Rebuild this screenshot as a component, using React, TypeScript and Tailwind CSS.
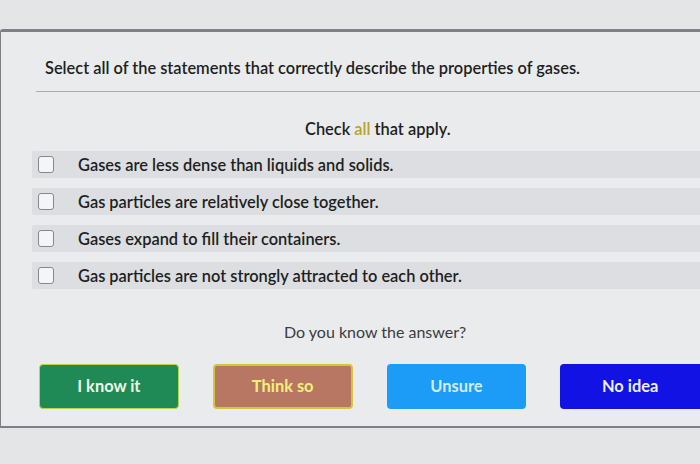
import React from "react";

const rows = [
  "Gases are less dense than liquids and solids.",
  "Gas particles are relatively close together.",
  "Gases expand to fill their containers.",
  "Gas particles are not strongly attracted to each other.",
];

export default function App() {
  return (
    <div
      className="w-[700px] h-[464px] overflow-hidden bg-[#e3e5e7] pt-[29px]"
      style={{ fontFamily: "Lato, 'Open Sans', sans-serif" }}
    >
      <div className="h-[399px] border-t-[3px] border-b-[2px] border-l border-[#7d8084] rounded-tl-[3px] bg-[#eaebed] flex flex-col">
        <div className="pl-[44px] pt-[26px] text-[16.4px] font-semibold text-[#1d1f22] leading-[20px]">
          Select all of the statements that correctly describe the properties of gases.
        </div>
        <div className="ml-[35px] mt-[13px] h-[1px] bg-[#a9abae]" />
        <div className="mt-[27px] pl-[304px] text-[16.4px] font-semibold text-[#1d1f22] leading-[20px]">
          Check <span className="text-[#b5a22a]">all</span> that apply.
        </div>
        <div className="mt-[12px] ml-[31px] flex flex-col gap-[10px]">
          {rows.map((r) => (
            <div
              key={r}
              className="h-[27px] bg-[#dcdee1] flex items-center rounded-l-[2px]"
            >
              <div className="ml-[6px] w-[16px] h-[17px] bg-[#f4f5f6] border border-[#85888c] rounded-[3px]" />
              <div className="ml-[24px] text-[16.4px] font-semibold text-[#1d1f22] leading-[20px]">
                {r}
              </div>
            </div>
          ))}
        </div>
        <div className="mt-[33px] pl-[283px] text-[16px] text-[#3a3c40] leading-[20px]">
          Do you know the answer?
        </div>
        <div className="mt-[22px] pl-[38px] flex gap-[34px]">
          <div className="w-[142px] h-[45px] rounded-[4px] bg-[#1f8a55] border border-[#b4d64a] flex items-center justify-center text-[16.4px] font-bold text-[#f0f7e8]">
            I know it
          </div>
          <div className="w-[142px] h-[45px] rounded-[4px] bg-[#b77763] border-2 border-[#d8c43a] flex items-center justify-center text-[16.4px] font-bold text-[#f4ef7a]">
            Think so
          </div>
          <div className="w-[142px] h-[45px] rounded-[4px] bg-[#1c9cf6] flex items-center justify-center text-[16.4px] font-bold text-[#d6ecfb]">
            Unsure
          </div>
          <div className="w-[142px] h-[45px] rounded-l-[4px] bg-[#1212e4] flex items-center justify-center text-[16.4px] font-bold text-[#eef0ff]">
            No idea
          </div>
        </div>
      </div>
    </div>
  );
}
